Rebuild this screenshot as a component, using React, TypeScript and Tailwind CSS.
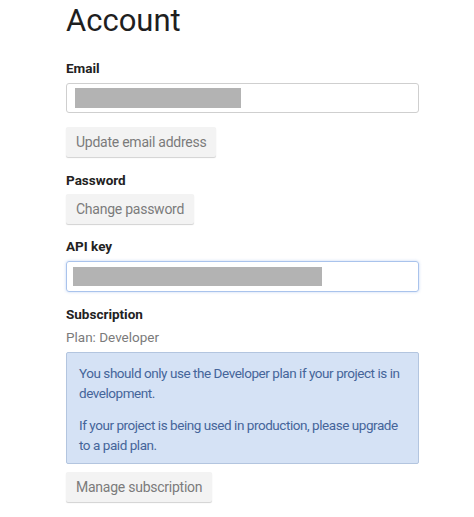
import React from 'react'

const font = { fontFamily: 'Roboto, "Liberation Sans", sans-serif' }

function GreyButton({ children }: { children: React.ReactNode }) {
  return (
    <button className="h-[30px] px-[10px] bg-[#f3f3f3] text-[14px] tracking-[-0.25px] text-[#7b7b7b] leading-[30px] rounded-[2px] shadow-[0_1px_1px_rgba(0,0,0,0.18)]">
      {children}
    </button>
  )
}

export default function App() {
  return (
    <div className="w-[474px] h-[517px] bg-white text-[#222]" style={font}>
      <div className="ml-[66px] w-[353px] flex flex-col items-start">
        <h1 className="pt-[5px] text-[31px] leading-[32px] font-normal text-[#1f1f1f]">Account</h1>

        {/* Email */}
        <label className="mt-[21px] text-[13.5px] leading-[20px] font-bold">Email</label>
        <div className="mt-[5px] w-full h-[30px] border border-[#cfcfcf] rounded-[3px] flex items-center px-[8px]">
          <div className="w-[166px] h-[20px] bg-[#b3b3b3]" />
        </div>
        <div className="mt-[14px]">
          <GreyButton>Update email address</GreyButton>
        </div>

        {/* Password */}
        <label className="mt-[13px] text-[13.5px] leading-[20px] font-bold">Password</label>
        <div className="mt-[4px]">
          <GreyButton>Change password</GreyButton>
        </div>

        {/* API key */}
        <label className="mt-[12px] text-[13.5px] leading-[20px] font-bold">API key</label>
        <div className="mt-[5px] w-full h-[31px] border border-[#a9c3ec] rounded-[3px] shadow-[0_0_3px_rgba(120,160,230,0.45)] flex items-center px-[6px]">
          <div className="w-[249px] h-[19px] bg-[#b3b3b3]" />
        </div>

        {/* Subscription */}
        <label className="mt-[12px] text-[13.5px] leading-[20px] font-bold">Subscription</label>
        <p className="mt-[3px] text-[13.5px] leading-[20px] text-[#7b7b7b]">Plan: Developer</p>
        <div className="mt-[5px] w-full h-[112px] bg-[#d5e2f5] border border-[#b3c5df] rounded-[2px] pl-[12px] pr-[12px] pt-[10px] text-[13.5px] tracking-[-0.45px] leading-[20px] text-[#45659a]">
          <p>You should only use the Developer plan if your project is in development.</p>
          <p className="mt-[12px]">If your project is being used in production, please upgrade to a paid plan.</p>
        </div>
        <div className="mt-[8px]">
          <GreyButton>Manage subscription</GreyButton>
        </div>
      </div>
    </div>
  )
}
